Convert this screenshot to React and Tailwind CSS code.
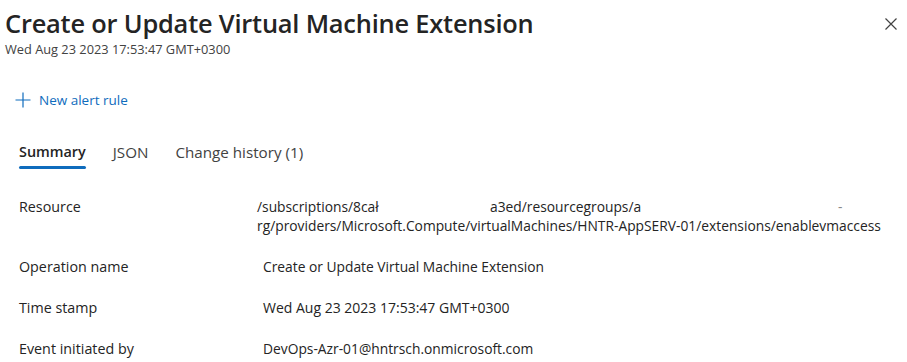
export default function App() {
  const font = { fontFamily: '"Open Sans", "Noto Sans", sans-serif' };
  return (
    <div className="w-[907px] h-[362px] bg-white text-[#323130] overflow-hidden relative" style={font}>
      <div className="flex items-start justify-between pl-[5px] pr-[8px] pt-[6px]">
        <div>
          <h1 className="text-[25.4px] leading-[34px] font-semibold text-[#242424] tracking-[-0.2px]">Create or Update Virtual Machine Extension</h1>
          <div className="text-[12.8px] leading-[16px] text-[#424242] mt-[1px]">Wed Aug 23 2023 17:53:47 GMT+0300</div>
        </div>
        <button className="mt-[10px] w-[16px] h-[16px] flex items-center justify-center text-[#424242]">
          <svg width="14" height="14" viewBox="0 0 14 14" fill="none" stroke="currentColor" strokeWidth="1.2">
            <path d="M1.5 1.5 L12.5 12.5 M12.5 1.5 L1.5 12.5" />
          </svg>
        </button>
      </div>

      <div className="flex items-center pl-[15px] mt-[34px] gap-[8px] text-[#0f6cbd]">
        <svg width="16" height="16" viewBox="0 0 16 16" fill="none" stroke="currentColor" strokeWidth="1.2">
          <path d="M8 0.5 V15.5 M0.5 8 H15.5" />
        </svg>
        <span className="text-[13.5px] leading-[18px]">New alert rule</span>
      </div>

      <div className="flex items-start pl-[19px] mt-[33px] gap-[27px] leading-[20px]">
        <div className="relative pb-[7px] text-[14.4px] font-semibold text-[#242424]">
          Summary
          <div className="absolute left-0 right-0 bottom-0 h-[3px] rounded-full bg-[#0f6cbd]"></div>
        </div>
        <div className="text-[15.2px] text-[#424242]">JSON</div>
        <div className="text-[15.2px] text-[#424242]">Change history (1)</div>
      </div>

      <div className="pl-[19px] mt-[28px] text-[14.3px] leading-[19px] text-[#242424]">
        <div className="flex">
          <div className="w-[238px] shrink-0">Resource</div>
          <div className="text-[13.8px]">
            <div className="flex whitespace-pre">
              <span className="inline-block w-[233px]">/subscriptions/8cał</span>
              <span className="inline-block w-[348px]">a3ed/resourcegroups/a</span>
              <span className="text-[#888]">-</span>
            </div>
            <div className="whitespace-nowrap">rg/providers/Microsoft.Compute/virtualMachines/HNTR-AppSERV-01/extensions/enablevmaccess</div>
          </div>
        </div>
        <div className="flex mt-[22px]">
          <div className="w-[244px] shrink-0">Operation name</div>
          <div className="text-[13.8px]">Create or Update Virtual Machine Extension</div>
        </div>
        <div className="flex mt-[22px]">
          <div className="w-[244px] shrink-0">Time stamp</div>
          <div className="text-[14px]">Wed Aug 23 2023 17:53:47 GMT+0300</div>
        </div>
        <div className="flex mt-[22px]">
          <div className="w-[244px] shrink-0">Event initiated by</div>
          <div className="text-[13.8px]">DevOps-Azr-01@hntrsch.onmicrosoft.com</div>
        </div>
      </div>
    </div>
  );
}
